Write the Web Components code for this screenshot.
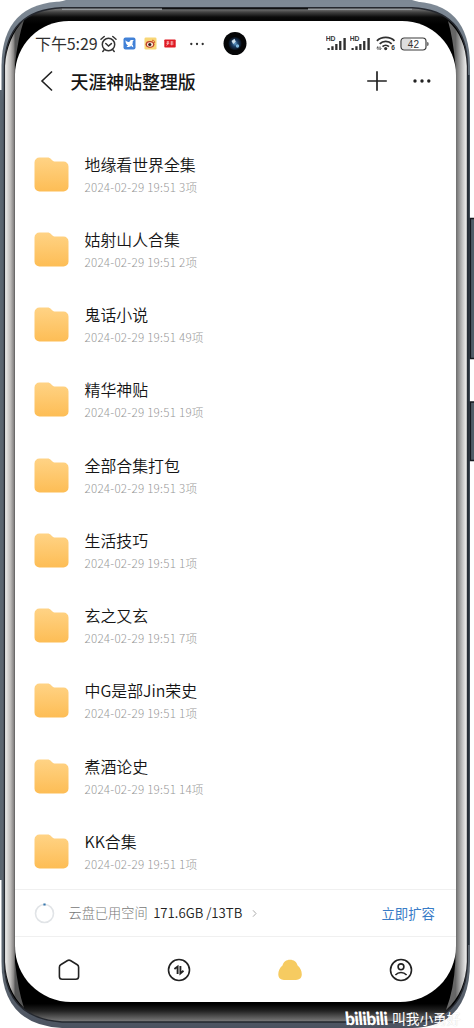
<!DOCTYPE html>
<html lang="zh-CN">
<head>
<meta charset="utf-8">
<title>天涯神贴整理版</title>
<style>
html,body{margin:0;background:#fff;overflow:hidden}
body{width:474px;height:1028px;font-family:"Noto Sans CJK SC","Noto Sans",sans-serif}
</style>
</head>
<body>
<phone-frame>
  <status-bar></status-bar>
  <nav-header>天涯神贴整理版</nav-header>
  <folder-list></folder-list>
  <storage-bar><span slot="used">171.6GB /13TB</span><span slot="action">立即扩容</span></storage-bar>
  <tab-bar></tab-bar>
</phone-frame>
<water-mark>叫我小勇好</water-mark>
<script>
function define(name, html) {
  const t = document.createElement('template');
  t.innerHTML = html;
  customElements.define(name, class extends HTMLElement {
    constructor() {
      super();
      this.attachShadow({ mode: 'open' }).append(t.content.cloneNode(true));
    }
  });
}

define('folder-item', `
<style>
:host{display:flex;align-items:center;padding-left:19px;height:75.28px;box-sizing:border-box}
svg{width:35px;height:35px;flex:none;margin-right:16px}
.t{font-size:15.9px;font-weight:350;line-height:22px;color:#151515;white-space:nowrap;height:22px}
.d{font-size:11.6px;font-weight:300;line-height:18px;color:#989898;white-space:nowrap;margin-top:2px;letter-spacing:.25px}
.c{padding-top:1px}
</style>
<svg viewBox="0 0 35 35"><defs><linearGradient id="g" x2="0" y2="1"><stop stop-color="#ffd385"/><stop offset="1" stop-color="#fdbd55"/></linearGradient></defs>
<path fill="url(#g)" d="M5.5 .5H13.6c1.5 0 2.3.5 3.3 1.5l1.6 1.5c.8.7 1.5 1 2.7 1h8.3a5 5 0 0 1 5 5v20a5 5 0 0 1-5 5h-24a5 5 0 0 1-5-5v-24a5 5 0 0 1 5-5z"/></svg>
<div class="c"><div class="t"><slot></slot></div><div class="d"><slot name="meta"></slot></div></div>`);

define('status-bar', `
<style>
:host{display:flex;align-items:center;height:45px;padding-left:20.5px;position:relative;color:#303030}
.time{font-size:16px;line-height:20px;width:65px;white-space:nowrap;letter-spacing:-.1px;margin-top:-1px}
svg{display:block;flex:none}
.hd{margin-right:3px}
text{font-family:"Liberation Sans",sans-serif}
.cam{margin:0 78.5px 0 18.5px}
</style>
<span class="time">下午5:29</span>
<svg width="17" height="18" viewBox="0 0 17 18" fill="none" stroke="#343434" stroke-width="1.5" stroke-linecap="round"><circle cx="8.5" cy="9.5" r="6.2"/><path d="M1 4.2 4.2 1.5M16 4.2 12.8 1.5M5.8 8.5 8.5 11l2.9-2.4M4 15l-1.2 1.4M13 15l1.2 1.4"/></svg>
<svg style="margin-left:6px" width="13" height="13" viewBox="0 0 13 13"><rect x=".5" y=".5" width="12" height="12" rx="2" fill="#4181d7"/><path d="M2.5 3.2C4 4.7 5 5 6.4 5.1 6.5 3.8 7.5 2.5 9 3l1.8.1-1.1 1.4C10 8 8 9.7 5.7 10c-1 0-1.9-.3-2.2-.6l1.6-.8C3.3 7.6 2.4 5.5 2.5 3.2zM8.2 9l2.1 1.6-.4-3z" fill="#fff"/></svg>
<svg style="margin-left:7.5px" width="13" height="13" viewBox="0 0 13 13"><rect x=".5" y=".5" width="12" height="12" rx="1.3" fill="#f8d675"/><ellipse cx="6" cy="7.3" rx="4.4" ry="3.4" fill="#bd3c2a"/><ellipse cx="6" cy="7.5" rx="3" ry="2.2" fill="#fff1dc"/><circle cx="5.8" cy="7.5" r="1.6" fill="#37201b"/><path d="M8 3.3c1.9-.3 3 .8 2.6 2.7" fill="none" stroke="#d96335" stroke-width="1"/></svg>
<svg style="margin-left:7.5px" width="12" height="9" viewBox="0 0 12 9"><rect x=".3" y=".5" width="11.4" height="8" rx=".8" fill="#df1a24"/><path d="M2.5 3h2.7M2.3 4.7h3M3.9 2v3.2L2.5 6.5M6.4 3h3M6.2 5h3.4M7.8 2.2v4.2" stroke="#ffdedb" stroke-width=".7" fill="none"/></svg>
<svg style="margin-left:12.5px" width="16" height="4" viewBox="0 0 16 4" fill="#303030"><circle cx="2.3" cy="2" r="1.15"/><circle cx="8" cy="2" r="1.15"/><circle cx="13.7" cy="2" r="1.15"/></svg>
<svg class="cam" width="24" height="24" viewBox="0 0 24 24"><defs><radialGradient id="lens"><stop stop-color="#6ba5d3"/><stop offset=".45" stop-color="#1b3e66"/><stop offset="1" stop-color="#09101a"/></radialGradient></defs><circle cx="12" cy="11.5" r="11.5" fill="#050607"/><circle cx="12" cy="11.5" r="6.6" fill="url(#lens)"/><path d="M8.5 9l3-2.3 1.3 3.1-2.6 2.2z" fill="#e1f1fa" opacity=".9"/><circle cx="14.5" cy="14" r="1.7" fill="#7eb8df"/></svg>
<svg class="hd" width="21" height="15" viewBox="0 0 21 15"><text x="-.3" y="5.4" font-size="6.8" font-weight="bold" fill="#393939">HD</text><path d="M1.5 12h2.2v2H1.5zM5.3 10.3h2.3V14H5.3zM9.2 8h2.3v6H9.2zM13.1 5h2.3v9h-2.3zM17.4 2h2.4v12h-2.4z" fill="#303030"/></svg>
<svg width="21" height="15" viewBox="0 0 21 15"><text x="-.3" y="5.4" font-size="6.8" font-weight="bold" fill="#393939">HD</text><path d="M1.5 12h2.2v2H1.5zM5.3 10.3h2.3V14H5.3zM9.2 8h2.3v6H9.2zM13.1 5h2.3v9h-2.3zM17.4 2h2.4v12h-2.4z" fill="#303030"/></svg>
<svg style="margin-left:5px" width="20" height="15" viewBox="0 0 20 15"><g fill="none" stroke="#303030" stroke-width="1.8"><path d="M.9 4.8C5.5.2 13.9.2 18.5 4.8M3.7 7.8c3.3-3.2 8.7-3.2 12 0M6.5 10.6c1.8-1.7 4.6-1.7 6.4 0"/></g><circle cx="9.7" cy="12.6" r="1.6" fill="#303030"/><path d="M2 13.8v-3.1L.6 12M4 10.5v3.2l1.3-1.3" fill="none" stroke="#303030" stroke-width=".9"/><text x="15.3" y="14.2" font-size="6.5" font-weight="bold" fill="#303030">6</text></svg>
<svg style="margin-left:4.5px" width="29" height="14" viewBox="0 0 29 14"><path d="M4 1.8h7v10.4H4a2.2 2.2 0 0 1-2-2.2V4c0-1.2.8-2.2 2-2.2z" fill="#dedede"/><rect x="1" y="1" width="25" height="12" rx="3.2" fill="none" stroke="#3b3b3b" stroke-width="1.2"/><path d="M27.3 5v4c1 0 1.2-.8 1.2-2s-.2-2-1.2-2z" fill="#333"/><text x="13.4" y="10.6" text-anchor="middle" font-size="10" fill="#333">42</text></svg>`);

define('nav-header', `
<style>
:host{display:flex;align-items:center;height:31px;padding-left:25px;color:#161616}
.t{font-size:17.9px;font-weight:500;line-height:26px;margin:-2px 0 0 17px;flex:1;white-space:nowrap}
svg{display:block;flex:none;position:relative;top:-.5px}
</style>
<svg width="14" height="22" viewBox="0 0 14 22" fill="none" stroke="#222" stroke-width="1.6"><path d="M12 1.5 2 11l10 9.5"/></svg>
<span class="t"><slot></slot></span>
<svg width="22" height="22" viewBox="0 0 22 22" stroke="#222" stroke-width="1.7"><path d="M1.2 11h19.6M11 1.2v19.6"/></svg>
<svg style="margin:0 24px 0 24px" width="20" height="4" viewBox="0 0 20 4" fill="#222"><circle cx="3" cy="2" r="1.7"/><circle cx="10" cy="2" r="1.7"/><circle cx="16.8" cy="2" r="1.7"/></svg>`);

customElements.define('folder-list', class extends HTMLElement {
  constructor() {
    super();
    const rows = [['地缘看世界全集', 3], ['姑射山人合集', 2], ['鬼话小说', 49], ['精华神贴', 19], ['全部合集打包', 3],
      ['生活技巧', 1], ['玄之又玄', 7], ['中G是部Jin荣史', 1], ['煮酒论史', 14], ['KK合集', 1]];
    this.attachShadow({ mode: 'open' }).innerHTML =
      '<style>:host{display:block;padding-top:39.4px;height:753px}</style>' +
      rows.map(([name, n]) => `<folder-item>${name}<span slot="meta">2024-02-29 19:51 ${n}项</span></folder-item>`).join('');
  }
});

define('storage-bar', `
<style>
:host{display:flex;align-items:center;height:46px;border-top:1px solid #f0f0f0;border-bottom:1px solid #f0f0f0;font-size:13.2px;font-weight:300;line-height:20px;color:#777;white-space:nowrap;padding:0 20.5px 0 19.5px}
svg{display:block;flex:none}
.l{margin-left:13.5px}
.u{margin-left:5.5px;color:#222;flex:none;width:89px;font-weight:350}
.a{margin-left:auto;color:#397cc7;font-size:13.4px;font-weight:400;margin-top:-1px}
</style>
<svg width="21" height="21" viewBox="0 0 21 21"><circle cx="10.5" cy="10.5" r="9" fill="none" stroke="#e1e4e7" stroke-width="1.6"/><path d="M9.4 1.5h2.2" stroke="#3677ad" stroke-width="2.2"/></svg>
<span class="l">云盘已用空间</span><span class="u"><slot name="used"></slot></span>
<svg style="margin-left:9px" width="7" height="9" viewBox="0 0 7 9" fill="none" stroke="#aaa"><path d="M2 1.3 5 4.5 2 7.7"/></svg>
<span class="a"><slot name="action"></slot></span>`);

define('tab-bar', `
<style>
:host{display:grid;grid-template-columns:repeat(4,1fr);place-items:center;height:65px;margin:0 -.5px 0 -1px}
svg{display:block}
</style>
<svg width="24" height="24" viewBox="0 0 24 24" fill="none" stroke="#222" stroke-width="1.6" stroke-linejoin="round"><path d="M2.4 9.2c0-1.3.3-1.8 1.3-2.4l6.9-4.3c1-.6 1.8-.6 2.8 0l6.9 4.3c1 .6 1.3 1.1 1.3 2.4v9.3c0 2-.8 2.8-2.8 2.8H5.2c-2 0-2.8-.8-2.8-2.8z"/></svg>
<svg width="24" height="24" viewBox="0 0 24 24" fill="none" stroke="#222" stroke-width="1.6"><circle cx="12" cy="12" r="10.5"/><path d="M10.6 16V8.6L7.4 11M13.4 8v7.4l3.1-2.6" stroke-width="1.9"/></svg>
<svg width="26" height="24" viewBox="0 0 26 24"><path fill="#f6cb61" d="M13 1.7c-3.9 0-6.5 2.1-7.5 5.9C2.8 9.8 1.3 13 1.3 16.3c0 3.6 2.4 5.7 5.7 5.7h12c3.4 0 5.8-2.1 5.8-5.7 0-3.3-1.5-6.5-4.2-8.7-1-3.8-3.7-5.9-7.6-5.9z"/></svg>
<svg width="24" height="24" viewBox="0 0 24 24" fill="none" stroke="#222" stroke-width="1.6"><circle cx="12" cy="12" r="10.5"/><circle cx="12" cy="8.8" r="2.9"/><path d="M6.4 17c3.2-3.4 8-3.4 11.2 0"/></svg>`);

define('phone-frame', `
<style>
:host{display:block;position:relative;width:474px;height:1028px;box-sizing:border-box;padding:21px 18.5px 26px 14.5px;overflow:hidden}
.frame{position:absolute;inset:0;display:block}
.screen{position:relative;height:981px;border-radius:54px 54px 56px 56px;background:#fff;overflow:hidden}
</style>
<svg class="frame" width="474" height="1028" viewBox="0 0 474 1028">
<defs>
<linearGradient id="l" gradientUnits="userSpaceOnUse" x1="4" x2="15"><stop stop-color="#c4c6c8"/><stop offset=".2" stop-color="#e4e3e1"/><stop offset=".6" stop-color="#bbb9b7"/><stop offset=".9" stop-color="#858382"/><stop offset="1" stop-color="#555"/></linearGradient>
<linearGradient id="r" gradientUnits="userSpaceOnUse" x1="455.5" x2="467"><stop stop-color="#666"/><stop offset=".2" stop-color="#858585"/><stop offset=".65" stop-color="#c9c9c9"/><stop offset="1" stop-color="#f5f5f4"/></linearGradient>
<linearGradient id="v" gradientUnits="userSpaceOnUse" y1="9" y2="1021" x2="0"><stop stop-color="#777"/><stop offset=".003" stop-color="#444"/><stop offset=".008" stop-color="#0b0b0b"/><stop offset=".015" stop-color="#000"/><stop offset=".983" stop-color="#000"/><stop offset=".99" stop-color="#222"/><stop offset="1" stop-color="#777"/></linearGradient>
<linearGradient id="b" gradientUnits="userSpaceOnUse" y1="0" y2="1028" x2="0"><stop stop-color="#7e8995"/><stop offset=".007" stop-color="#7e8995"/><stop offset=".1" stop-color="#56616c"/><stop offset=".95" stop-color="#5d6670"/><stop offset="1" stop-color="#4c5360"/></linearGradient>
</defs>
<path d="M0 90h3v790H0z" fill="#5b6670"/>
<path d="M66 0H412l20 6H46z" fill="#7d8894"/>
<path d="M64 1.5H410Q470 1.5 470 66V962Q470 1027 412 1028H62Q1.5 1025 1.5 962V66Q2 2 64 1.5Z" fill="url(#b)"/>
<path d="M62 7.7H412Q466.9 10 467.3 66V962Q466 1021 412 1022H62Q4.5 1018 4.5 962V66Q6 10 62 7.7Z" fill="url(#v)" stroke="#25282f" stroke-width="1.4"/>
<path d="M62 9.3H412" stroke="#aab0b6" stroke-width=".8"/>
<path d="M162 8.7H308" stroke="#111" stroke-width="1.6"/>
<path d="M5 66C6 48 13 31 24 20Q18 38 15 64V962Q18 990 24 1008C12 996 6 981 5 962Z" fill="url(#l)"/>
<path d="M466.8 66C466 46 460 32 448 21Q453 38 455.3 64V962Q454 989 446 1010C460 998 466 981 466.8 962Z" fill="url(#r)"/>
<path d="M470 218h4v141h-4zM470 402h4v59h-4z" fill="#515e68"/>
<path d="M474 218.5h-3.7v140h3.7M474 402h-3.7v58.5h3.7" fill="none" stroke="#15191e" stroke-width="1.6"/>
<path d="M468.5 75V945" stroke="#27303a" stroke-width="2"/>
</svg>
<div class="screen"><slot></slot></div>`);

define('water-mark', `
<style>
:host{position:absolute;left:345px;top:1006px;width:129px;height:22px;overflow:hidden;display:flex;color:#fff;white-space:nowrap;text-shadow:0 0 1px #7776}
.logo{font:900 18px/25px Lato,sans-serif;letter-spacing:-.4px;width:47px;transform:scaleX(.94) skewX(6deg);transform-origin:0 50%;flex:none}
.name{font-size:13.7px;height:22px;padding-top:2px;box-sizing:border-box;line-height:20px;flex:none}
</style>
<span class="logo">bilibili</span><span class="name"><slot></slot></span>`);
</script>
</body>
</html>
